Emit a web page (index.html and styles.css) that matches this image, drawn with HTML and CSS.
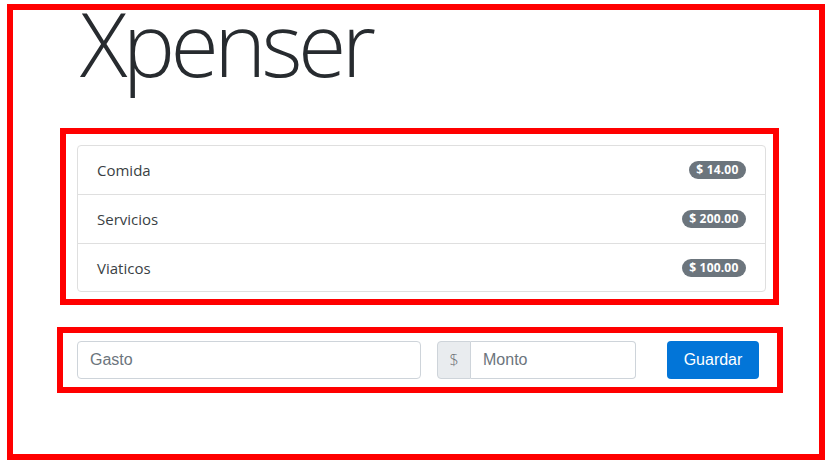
FILE: index.html
```html
<!DOCTYPE html>
<html lang="es">
<head>
<meta charset="utf-8">
<title>Xpenser</title>
<link rel="stylesheet" href="styles.css">
</head>
<body>
<div class="app">
  <h1 class="title">Xpenser</h1>
  <div class="list-box">
    <ul class="list-group">
      <li class="list-item"><span>Comida</span><span class="badge">$ 14.00</span></li>
      <li class="list-item"><span>Servicios</span><span class="badge">$ 200.00</span></li>
      <li class="list-item"><span>Viaticos</span><span class="badge">$ 100.00</span></li>
    </ul>
  </div>
  <form class="form-box">
    <input class="control gasto" type="text" placeholder="Gasto">
    <div class="input-group">
      <span class="prepend">$</span>
      <input class="control monto" type="text" placeholder="Monto">
    </div>
    <button class="btn" type="button">Guardar</button>
  </form>
</div>
</body>
</html>
```

FILE: styles.css
```css
* { box-sizing: border-box; }
html, body { margin: 0; padding: 0; background: #fff; }
body {
  font-family: "Open Sans", "Noto Sans", sans-serif;
  color: #212529;
}
.app {
  margin: 4px 0 0 7px;
  width: 818px;
  height: 456px;
  border: 6px solid #ff0000;
  display: flex;
  flex-direction: column;
}
.title {
  margin: 0 0 52px 67px;
  font-size: 88px;
  font-weight: 300;
  line-height: 66px;
  letter-spacing: -4.6px;
  color: #272b2f;
}
.list-box {
  margin-left: 47px;
  width: 719px;
  height: 177px;
  border: 6px solid #ff0000;
  padding: 11px 7px 6px 11px;
}
.list-group {
  list-style: none;
  margin: 0;
  padding: 0;
  border: 1px solid #dfdfdf;
  border-radius: 4px;
}
.list-item {
  height: 49px;
  padding: 0 19px 0 19px;
  display: flex;
  align-items: center;
  justify-content: space-between;
  font-size: 15px;
  color: #3a3f44;
  border-top: 1px solid #dfdfdf;
}
.list-item:first-child { border-top: 0; height: 48px; }
.list-item:last-child { height: 48px; }
.badge {
  background: #6c757d;
  color: #fff;
  font-size: 12px;
  font-weight: 700;
  line-height: 1;
  padding: 3px 7.5px;
  border-radius: 10px;
  letter-spacing: 0.2px;
}
.form-box {
  margin: 22px 0 0 44px;
  width: 726px;
  height: 66px;
  border: 6px solid #ff0000;
  padding: 8px 18px 8px 14px;
  display: flex;
  align-items: center;
}
.control {
  height: 38px;
  border: 1px solid #ced4da;
  border-radius: 4px;
  padding: 0 12px;
  font-family: "Liberation Sans", Arial, sans-serif;
  font-size: 16px;
  color: #495057;
  background: #fff;
  outline: none;
}
.control::placeholder { color: #6c757d; }
.gasto { width: 344px; }
.input-group {
  margin-left: 16px;
  width: 199px;
  display: flex;
}
.prepend {
  width: 34px;
  height: 38px;
  display: flex;
  align-items: center;
  justify-content: center;
  background: #e9ecef;
  border: 1px solid #ced4da;
  border-radius: 4px 0 0 4px;
  color: #6c7075;
  font-size: 16px;
  font-weight: 300;
}
.monto {
  flex: 1;
  min-width: 0;
  border-left: 0;
  border-radius: 0 4px 4px 0;
}
.btn {
  margin-left: 31px;
  width: 92px;
  height: 38px;
  border: 0;
  border-radius: 4px;
  background: #0275d8;
  color: #fff;
  font-family: "Liberation Sans", Arial, sans-serif;
  font-size: 16px;
  padding: 0;
}
```
